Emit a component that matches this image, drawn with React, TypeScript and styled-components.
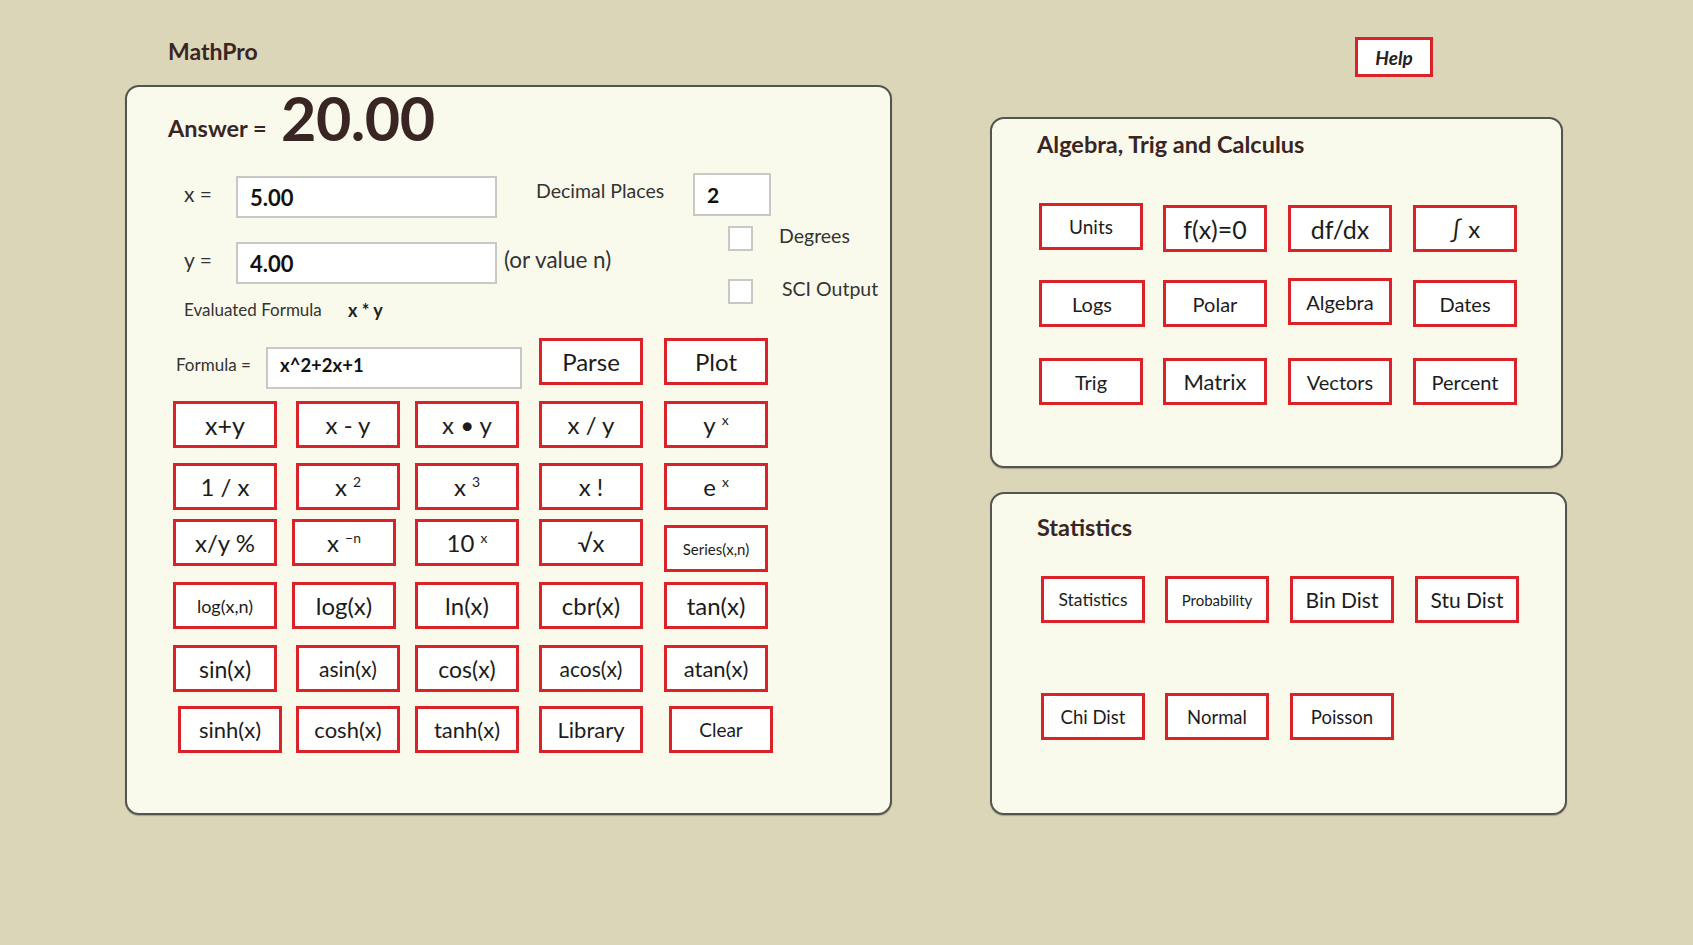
import React from "react";
import styled, { createGlobalStyle } from "styled-components";

const GlobalStyle = createGlobalStyle`
  html, body { margin: 0; padding: 0; background: #dcd6b8; }
  body { font-family: Lato, "Open Sans", "Liberation Sans", sans-serif; color: #222; }
  * { box-sizing: border-box; }
`;

const Page = styled.div`
  display: flex;
  align-items: flex-start;
  width: 1693px;
  height: 945px;
  overflow: hidden;
  background: #dcd6b8;
`;

const LeftCol = styled.div`
  margin-left: 125px;
  width: 767px;
  display: flex;
  flex-direction: column;
`;

const RightCol = styled.div`
  margin-left: 98px;
  width: 577px;
  display: flex;
  flex-direction: column;
`;

const AppTitle = styled.div`
  padding: 38px 0 0 43px;
  line-height: 26px;
  font-size: 23px;
  font-weight: 700;
  color: #3a2525;
`;

const Panel = styled.div<{ $w: number; $h: number; $mt: number }>`
  width: ${(p) => p.$w}px;
  height: ${(p) => p.$h}px;
  margin-top: ${(p) => p.$mt}px;
  background: #fafaec;
  border: 2px solid #55554f;
  border-radius: 14px;
  box-shadow: 0 1px 1px rgba(0, 0, 0, 0.25);
  display: flex;
  flex-direction: column;
`;

const AnswerRow = styled.div`
  display: flex;
  align-items: baseline;
  padding-left: 41px;
  height: 61px;
  color: #3a2525;
`;

const AnswerLabel = styled.span`
  width: 113px;
  font-size: 23.5px;
  line-height: 26px;
  font-weight: 700;
  position: relative;
  top: -4px;
`;

const AnswerValue = styled.span`
  font-size: 61px;
  line-height: 61px;
  font-weight: 700;
  letter-spacing: -0.5px;
`;

const TopArea = styled.div`
  display: grid;
  grid-template-columns: 368px 1fr;
  margin: 25px 0 0 41px;
  height: 147px;
`;

const Fields = styled.div`
  display: flex;
  flex-direction: column;
`;

const FieldRow = styled.div<{ $mt: number }>`
  display: flex;
  align-items: center;
  height: 42px;
  margin-top: ${(p) => p.$mt}px;
  white-space: nowrap;
`;

const FieldLabel = styled.span`
  margin-left: 16px;
  width: 52px;
  flex: none;
  font-size: 21px;
  color: #333;
  position: relative;
  top: -4px;
`;

const TextBox = styled.div<{ $w: number; $h: number; $fs: number }>`
  flex: none;
  width: ${(p) => p.$w}px;
  height: ${(p) => p.$h}px;
  border: 2px solid #c8c8c4;
  background: #fff;
  padding-left: 12px;
  display: flex;
  align-items: center;
  font-size: ${(p) => p.$fs}px;
  font-weight: 700;
  color: #111;
`;

const Aside = styled.span`
  margin-left: 7px;
  font-size: 22.5px;
  color: #333;
  position: relative;
  top: -4px;
`;

const EvalRow = styled.div`
  display: flex;
  margin: 16px 0 0 16px;
  line-height: 20px;
  font-size: 17px;
  color: #333;
`;

const EvalLabel = styled.span`
  width: 164px;
`;

const EvalValue = styled.span`
  font-weight: 700;
  font-size: 18px;
  color: #222;
`;

const Options = styled.div`
  display: flex;
  flex-direction: column;
`;

const DecRow = styled.div`
  display: flex;
  align-items: center;
  height: 43px;
`;

const DecLabel = styled.span`
  width: 157px;
  font-size: 19.5px;
  color: #333;
  position: relative;
  top: -4px;
`;

const CheckRow = styled.div<{ $mt: number; $gap: number }>`
  display: flex;
  align-items: center;
  margin-top: ${(p) => p.$mt}px;
  padding-left: 192px;
  gap: ${(p) => p.$gap}px;
  white-space: nowrap;
`;

const CheckBox = styled.span`
  width: 25px;
  height: 25px;
  border: 2px solid #c8c8c4;
  background: #fff;
  flex: none;
`;

const CheckLabel = styled.span`
  font-size: 19.5px;
  color: #333;
  position: relative;
  top: -3px;
`;

const Keypad = styled.div`
  padding-left: 46px;
  display: flex;
  flex-direction: column;
`;

const KeyRow = styled.div<{ $mt: number; $cols: string }>`
  display: grid;
  grid-template-columns: ${(p) => p.$cols};
  grid-auto-rows: 47px;
  margin-top: ${(p) => p.$mt}px;
`;

const Key = styled.button<{ $fs?: number; $dx?: number; $dy?: number; $w?: number }>`
  width: ${(p) => p.$w ?? 104}px;
  height: 47px;
  margin-left: ${(p) => p.$dx ?? 0}px;
  margin-top: ${(p) => p.$dy ?? 0}px;
  padding: 0;
  background: #fff;
  border: 3px solid #db2228;
  font-family: Lato, "Open Sans", "Liberation Sans", sans-serif;
  font-size: ${(p) => p.$fs ?? 22}px;
  color: #1c1c1c;
  display: flex;
  align-items: center;
  justify-content: center;
  white-space: nowrap;
  cursor: pointer;
  sup {
    font-size: 0.58em;
    margin-left: 6px;
    position: relative;
    top: -0.35em;
    vertical-align: top;
    line-height: 1;
  }
`;

const FormulaGroup = styled.div`
  grid-column: 1 / span 3;
  display: flex;
  align-items: center;
  margin-top: 9px;
  height: 42px;
`;

const FormulaLabel = styled.span`
  margin-left: 3px;
  width: 90px;
  flex: none;
  font-size: 17px;
  color: #333;
  position: relative;
  top: -4px;
`;

const FormulaText = styled.span`
  position: relative;
  top: -3px;
`;

const HelpButton = styled.button`
  margin: 37px 0 0 365px;
  width: 78px;
  height: 40px;
  background: #fff;
  border: 3px solid #db2228;
  font-family: Lato, "Open Sans", "Liberation Sans", sans-serif;
  font-style: italic;
  font-weight: 700;
  font-size: 19px;
  color: #222;
  padding: 0;
`;

const PanelTitle = styled.div<{ $mt: number }>`
  margin: ${(p) => p.$mt}px 0 0 45px;
  line-height: 26px;
  font-size: 23.5px;
  font-weight: 700;
  color: #3a2525;
`;

const SideGrid = styled.div<{ $pl: number }>`
  padding-left: ${(p) => p.$pl}px;
  display: flex;
  flex-direction: column;
`;

const MAIN_COLS = "123px 119px 124px 125px 104px";
const SIDE_COLS = "124px 125px 125px 104px";

type K = { t: React.ReactNode; fs?: number; dx?: number; dy?: number; w?: number };

const mainRows: { mt: number; keys: K[] }[] = [
  {
    mt: 16,
    keys: [
      { t: "x+y", fs: 25 },
      { t: "x - y", fs: 24 },
      { t: "x • y", fs: 24 },
      { t: "x / y", fs: 24 },
      { t: <>y<sup>x</sup></>, fs: 24 },
    ],
  },
  {
    mt: 15,
    keys: [
      { t: "1 / x", fs: 24 },
      { t: <>x<sup>2</sup></>, fs: 24 },
      { t: <>x<sup>3</sup></>, fs: 24 },
      { t: "x !", fs: 24 },
      { t: <>e<sup>x</sup></>, fs: 24 },
    ],
  },
  {
    mt: 9,
    keys: [
      { t: "x/y %", fs: 24 },
      { t: <>x<sup>−n</sup></>, fs: 24, dx: -4 },
      { t: <>10<sup>x</sup></>, fs: 24 },
      { t: "√x", fs: 24 },
      { t: "Series(x,n)", fs: 15, dy: 6 },
    ],
  },
  {
    mt: 16,
    keys: [
      { t: "log(x,n)", fs: 18 },
      { t: "log(x)", fs: 24, dx: -4 },
      { t: "ln(x)", fs: 24 },
      { t: "cbr(x)", fs: 24 },
      { t: "tan(x)", fs: 24 },
    ],
  },
  {
    mt: 16,
    keys: [
      { t: "sin(x)", fs: 23 },
      { t: "asin(x)", fs: 21 },
      { t: "cos(x)", fs: 23 },
      { t: "acos(x)", fs: 21 },
      { t: "atan(x)", fs: 22 },
    ],
  },
  {
    mt: 14,
    keys: [
      { t: "sinh(x)", fs: 22, dx: 5 },
      { t: "cosh(x)", fs: 22 },
      { t: "tanh(x)", fs: 22 },
      { t: "Library", fs: 22 },
      { t: "Clear", fs: 19, dx: 5 },
    ],
  },
];

const algebraRows: { mt: number; keys: K[] }[] = [
  {
    mt: 48,
    keys: [
      { t: "Units", fs: 19, dy: -2 },
      { t: "f(x)=0", fs: 25 },
      { t: "df/dx", fs: 25 },
      { t: "∫ x", fs: 24 },
    ],
  },
  {
    mt: 28,
    keys: [
      { t: "Logs", fs: 20, w: 106 },
      { t: "Polar", fs: 20 },
      { t: "Algebra", fs: 20, dy: -2 },
      { t: "Dates", fs: 20 },
    ],
  },
  {
    mt: 31,
    keys: [
      { t: "Trig", fs: 20 },
      { t: "Matrix", fs: 22 },
      { t: "Vectors", fs: 20 },
      { t: "Percent", fs: 20 },
    ],
  },
];

const statRows: { mt: number; keys: K[] }[] = [
  {
    mt: 36,
    keys: [
      { t: "Statistics", fs: 17.5 },
      { t: "Probability", fs: 15 },
      { t: "Bin Dist", fs: 21 },
      { t: "Stu Dist", fs: 21 },
    ],
  },
  {
    mt: 70,
    keys: [
      { t: "Chi Dist", fs: 18.5 },
      { t: "Normal", fs: 18.5 },
      { t: "Poisson", fs: 18.5 },
    ],
  },
];

function renderKeys(keys: K[]) {
  return keys.map((k, i) => (
    <Key key={i} $fs={k.fs} $dx={k.dx} $dy={k.dy} $w={k.w}>
      {k.t}
    </Key>
  ));
}

export default function App() {
  return (
    <>
      <GlobalStyle />
      <Page>
        <LeftCol>
          <AppTitle>MathPro</AppTitle>
          <Panel $w={767} $h={730} $mt={21}>
            <AnswerRow>
              <AnswerLabel>Answer =</AnswerLabel>
              <AnswerValue>20.00</AnswerValue>
            </AnswerRow>
            <TopArea>
              <Fields>
                <FieldRow $mt={3}>
                  <FieldLabel>x =</FieldLabel>
                  <TextBox $w={261} $h={42} $fs={22}>5.00</TextBox>
                </FieldRow>
                <FieldRow $mt={24}>
                  <FieldLabel>y =</FieldLabel>
                  <TextBox $w={261} $h={42} $fs={22}>4.00</TextBox>
                  <Aside>(or value n)</Aside>
                </FieldRow>
                <EvalRow>
                  <EvalLabel>Evaluated Formula</EvalLabel>
                  <EvalValue>x * y</EvalValue>
                </EvalRow>
              </Fields>
              <Options>
                <DecRow>
                  <DecLabel>Decimal Places</DecLabel>
                  <TextBox $w={78} $h={43} $fs={21}>2</TextBox>
                </DecRow>
                <CheckRow $mt={10} $gap={26}>
                  <CheckBox />
                  <CheckLabel>Degrees</CheckLabel>
                </CheckRow>
                <CheckRow $mt={28} $gap={29}>
                  <CheckBox />
                  <CheckLabel>SCI Output</CheckLabel>
                </CheckRow>
              </Options>
            </TopArea>
            <Keypad>
              <KeyRow $mt={18} $cols={MAIN_COLS}>
                <FormulaGroup>
                  <FormulaLabel>Formula =</FormulaLabel>
                  <TextBox $w={256} $h={42} $fs={18.5}>
                    <FormulaText>x^2+2x+1</FormulaText>
                  </TextBox>
                </FormulaGroup>
                <Key $fs={24}>Parse</Key>
                <Key $fs={24}>Plot</Key>
              </KeyRow>
              {mainRows.map((r, i) => (
                <KeyRow key={i} $mt={r.mt} $cols={MAIN_COLS}>
                  {renderKeys(r.keys)}
                </KeyRow>
              ))}
            </Keypad>
          </Panel>
        </LeftCol>
        <RightCol>
          <HelpButton>Help</HelpButton>
          <Panel $w={573} $h={351} $mt={40}>
            <PanelTitle $mt={12}>Algebra, Trig and Calculus</PanelTitle>
            <SideGrid $pl={47}>
              {algebraRows.map((r, i) => (
                <KeyRow key={i} $mt={r.mt} $cols={SIDE_COLS}>
                  {renderKeys(r.keys)}
                </KeyRow>
              ))}
            </SideGrid>
          </Panel>
          <Panel $w={577} $h={323} $mt={24}>
            <PanelTitle $mt={20}>Statistics</PanelTitle>
            <SideGrid $pl={49}>
              {statRows.map((r, i) => (
                <KeyRow key={i} $mt={r.mt} $cols={SIDE_COLS}>
                  {renderKeys(r.keys)}
                </KeyRow>
              ))}
            </SideGrid>
          </Panel>
        </RightCol>
      </Page>
    </>
  );
}
